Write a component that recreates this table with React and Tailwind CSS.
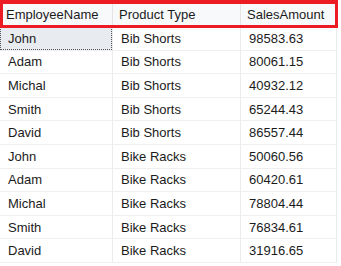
import React from "react";

const rows = [
  ["John", "Bib Shorts", "98583.63"],
  ["Adam", "Bib Shorts", "80061.15"],
  ["Michal", "Bib Shorts", "40932.12"],
  ["Smith", "Bib Shorts", "65244.43"],
  ["David", "Bib Shorts", "86557.44"],
  ["John", "Bike Racks", "50060.56"],
  ["Adam", "Bike Racks", "60420.61"],
  ["Michal", "Bike Racks", "78804.44"],
  ["Smith", "Bike Racks", "76834.61"],
  ["David", "Bike Racks", "31916.65"],
];

const headers = ["EmployeeName", "Product Type", "SalesAmount"];

export default function App() {
  return (
    <div className="relative w-[341px] h-[266px] overflow-hidden bg-white text-[13px] leading-none text-[#1b1b1b] font-['Liberation_Sans',Arial,sans-serif]">
      <div className="grid grid-cols-[112px_128px_97px] w-[337px] border-r border-[#ececec]">
        {headers.map((h, i) => (
          <div
            key={h}
            className={`h-[27px] flex items-center pl-[6px] pt-[2px] bg-[#f8f9fb] border-b border-[#e4e4e4] ${i > 0 ? "border-l" : ""}`}
          >
            {h}
          </div>
        ))}
        {rows.map((r, ri) =>
          r.map((c, ci) => (
            <div
              key={`${ri}-${ci}`}
              className={`relative h-[23.6px] flex items-center pl-[8px] border-b border-[#efefef] ${ci > 0 ? "border-l border-l-[#ececec]" : ""} ${ri === 0 && ci === 0 ? "bg-[#e8ecf1]" : ""}`}
            >
              {ri === 0 && ci === 0 && (
                <div className="absolute inset-0 border border-dotted border-[#555]" />
              )}
              <span className="relative">{c}</span>
            </div>
          ))
        )}
      </div>
      {/* red annotation box over the header */}
      <div className="absolute left-0 top-0 w-[338px] h-[28px] border-t-4 border-x-[3px] border-b-[3px] border-[#ed1c24]" />
    </div>
  );
}
